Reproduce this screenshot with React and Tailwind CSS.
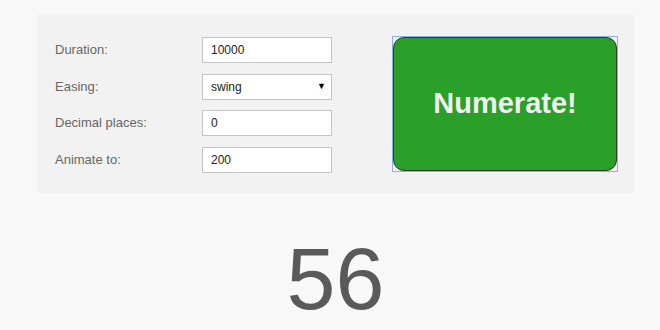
import React, { useState } from "react";

const rows = [
  { label: "Duration:", value: "10000" },
  { label: "Easing:", value: "swing", select: true },
  { label: "Decimal places:", value: "0" },
  { label: "Animate to:", value: "200" },
];

export default function App() {
  const [count] = useState(56);

  return (
    <div
      className="h-[330px] w-[660px] overflow-hidden bg-[#f8f8f8]"
      style={{ fontFamily: '"Liberation Sans", Arial, sans-serif' }}
    >
      <div className="ml-[37px] w-[597px] pt-[14px]">
        <div className="flex h-[179px] bg-[#f2f2f2] pl-[18px] pt-[23px]">
          <div className="flex w-[296px] flex-col gap-[10.5px]">
            {rows.map((r) => (
              <div key={r.label} className="flex h-[26px] items-center">
                <span className="w-[147px] text-[13px] text-[#666]">{r.label}</span>
                <div className="relative flex h-[26px] w-[130px] items-center border border-[#c4c4c4] bg-white px-[8px] text-[12px] text-[#222]">
                  {r.value}
                  {r.select && (
                    <span className="absolute right-[5px] top-[7px] text-[9px] leading-none text-black">▼</span>
                  )}
                </div>
              </div>
            ))}
          </div>
          <div className="ml-[41px] mt-[-1px] h-[136px] w-[226px] border border-[#8ab0f0]">
            <button className="flex h-full w-full items-center justify-center rounded-[11px] border border-[#2e3a2e] bg-[#2a9f2a] text-[29px] font-bold text-[#f0f0f0]">
              Numerate!
            </button>
          </div>
        </div>
        <div className="mt-[42px] text-center text-[88px] leading-none text-[#5a5a5a]">{count}</div>
      </div>
    </div>
  );
}
